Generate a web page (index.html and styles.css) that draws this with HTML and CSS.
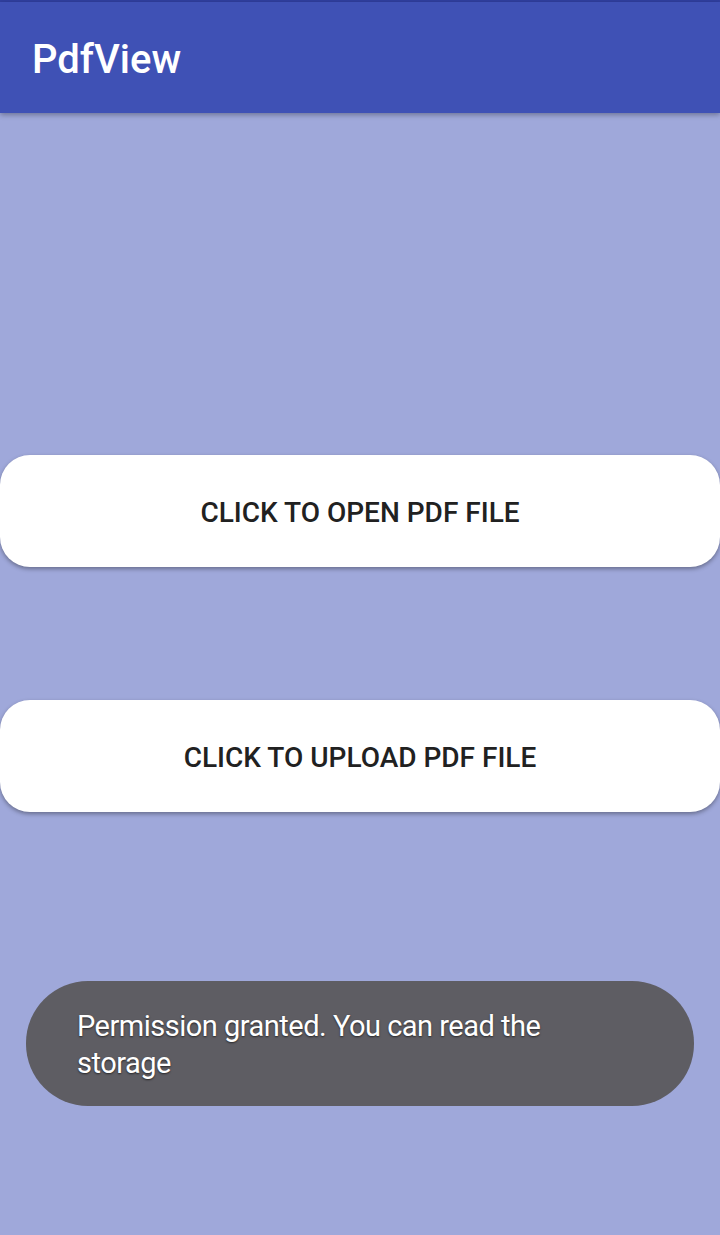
FILE: index.html
```html
<!DOCTYPE html>
<html>
<head>
<meta charset="utf-8">
<link rel="stylesheet" href="styles.css">
</head>
<body>
<div class="status"></div>
<header class="toolbar"><h1 class="title">PdfView</h1></header>
<main class="content">
  <button class="btn btn-open">CLICK TO OPEN PDF FILE</button>
  <button class="btn btn-upload">CLICK TO UPLOAD PDF FILE</button>
</main>
<div class="toast">Permission granted. You can read the storage</div>
</body>
</html>
```
FILE: styles.css
```css
html, body {
  margin: 0;
  padding: 0;
}
body {
  width: 720px;
  height: 1235px;
  background: #9FA8DA;
  font-family: Roboto, "Liberation Sans", sans-serif;
  position: relative;
  overflow: hidden;
}
.status {
  height: 2px;
  background: #303F9F;
}
.toolbar {
  height: 111px;
  box-sizing: border-box;
  padding: 4px 0 0 32px;
  background: #3F51B5;
  box-shadow: 0 2px 5px rgba(0,0,0,0.3);
  display: flex;
  align-items: center;
  position: relative;
  z-index: 1;
}
.title {
  margin: 0;
  color: #fff;
  font-size: 40px;
  line-height: 47px;
  font-weight: 500;
  letter-spacing: 0;
}
.content {
  display: flex;
  flex-direction: column;
  padding-top: 342px;
  gap: 133px;
}
.btn {
  display: block;
  width: 720px;
  height: 112px;
  border: none;
  border-radius: 30px;
  background: #fff;
  box-shadow: 0 2px 4px rgba(0,0,0,0.35);
  font-family: Roboto, "Liberation Sans", sans-serif;
  font-size: 28px;
  font-weight: 500;
  color: #212121;
  padding: 3px 0 0 0;
}
.toast {
  position: absolute;
  left: 26px;
  top: 981px;
  width: 668px;
  height: 125px;
  box-sizing: border-box;
  padding: 27px 92px 0 51px;
  border-radius: 62px;
  background: #5E5D63;
  color: #fff;
  font-size: 29px;
  letter-spacing: -0.5px;
  line-height: 37px;
  text-shadow: 0 1px 2px rgba(0,0,0,0.6);
}
```
